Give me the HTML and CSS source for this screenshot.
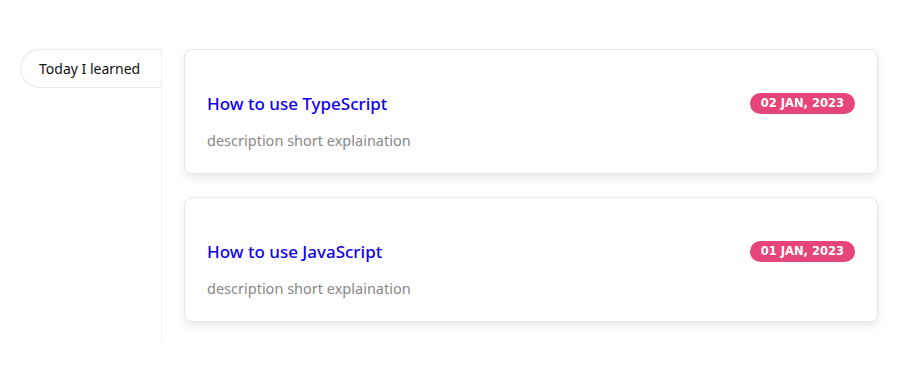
FILE: index.html
```html
<!DOCTYPE html>
<html lang="en">
<head>
    <meta charset="UTF-8">
    <title>Today I learned</title>
    <link rel="stylesheet" href="styles.css">
</head>
<body>
    <div class="layout">
        <aside class="sidebar">
            <a class="tab" href="#">Today I learned</a>
        </aside>
        <main class="posts">
            <div class="post-card">
                <div class="post-head">
                    <h3 class="post-title">How to use TypeScript</h3>
                    <span class="post-date">02 JAN, 2023</span>
                </div>
                <p class="post-desc">description short explaination</p>
            </div>
            <div class="post-card">
                <div class="post-head">
                    <h3 class="post-title">How to use JavaScript</h3>
                    <span class="post-date">01 JAN, 2023</span>
                </div>
                <p class="post-desc">description short explaination</p>
            </div>
        </main>
    </div>
</body>
</html>
```

FILE: styles.css
```css
body {
    margin: 0;
    font-family: "Noto Sans", "Open Sans", sans-serif;
    background-color: #fff;
}
.layout {
    display: flex;
    margin-top: 48px;
    padding-right: 28px;
}
.sidebar {
    width: 141px;
    padding-left: 20px;
    border-right: 1px solid #eeeeee;
    padding-top: 1px;
    height: 293px;
}
.tab {
    display: block;
    height: 37px;
    line-height: 37px;
    padding-left: 18px;
    border: 1px solid #e8e8e8;
    border-right: none;
    border-radius: 20px 0 0 20px;
    color: #111;
    font-size: 14px;
    text-decoration: none;
}
.posts {
    flex: 1;
    margin-left: 22px;
    padding-top: 1px;
    display: flex;
    flex-direction: column;
    gap: 23px;
}
.post-card {
    border: 1px solid #e6e6e6;
    border-radius: 8px;
    box-shadow: 0 4px 10px rgba(0, 0, 0, 0.09);
    padding: 42px 22px 22px 22px;
    height: 59px;
}
.post-head {
    display: flex;
    justify-content: space-between;
    align-items: center;
}
.post-title {
    margin: 0;
    font-size: 17px;
    font-weight: 500;
    color: #0e00f5;
}
.post-date {
    background-color: #e6457a;
    color: #fff;
    font-family: "DejaVu Sans", sans-serif;
    font-size: 11.5px;
    font-weight: 700;
    line-height: 15px;
    padding: 3px 11px;
    border-radius: 12px;
}
.post-desc {
    margin: 15px 0 0;
    font-size: 14.5px;
    color: #888;
}
```
